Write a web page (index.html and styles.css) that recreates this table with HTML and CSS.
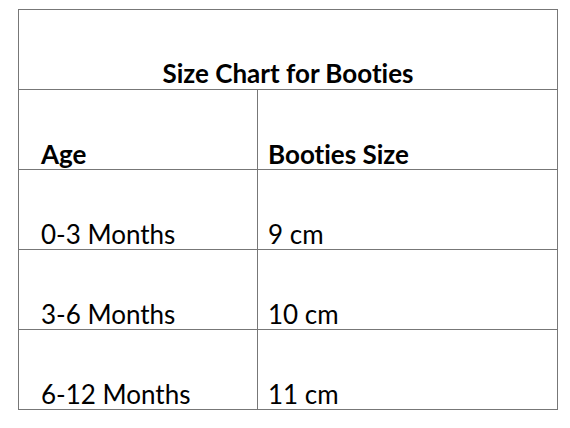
FILE: index.html
```html
<!DOCTYPE html>
<html>
<head>
<meta charset="utf-8">
<link rel="stylesheet" href="styles.css">
</head>
<body>
<table class="chart">
  <tr class="row"><th class="title" colspan="2">Size Chart for Booties</th></tr>
  <tr class="row"><th class="c1">Age</th><th class="c2">Booties Size</th></tr>
  <tr class="row"><td class="c1">0-3 Months</td><td class="c2">9 cm</td></tr>
  <tr class="row"><td class="c1">3-6 Months</td><td class="c2">10 cm</td></tr>
  <tr class="row"><td class="c1">6-12 Months</td><td class="c2">11 cm</td></tr>
</table>
</body>
</html>
```
FILE: styles.css
```css
html, body { margin: 0; padding: 0; background: #fff; }
body { padding: 9px 0 0 18px; }
.chart {
  border-collapse: collapse;
  width: 540px;
  font-family: Lato, "Open Sans", sans-serif;
  font-variant-ligatures: none;
  color: #000;
}
.chart th, .chart td {
  border: 1px solid #777;
  vertical-align: bottom;
  text-align: left;
  padding: 0;
  font-size: 26px;
  line-height: 30px;
}
.row { height: 80px; }
.chart th { font-weight: bold; }
.chart td { font-weight: normal; }
.title { text-align: center !important; padding-bottom: 1px !important; }
.c1 { width: 216px; padding-left: 22px !important; }
.c2 { padding-left: 10px !important; }
```
